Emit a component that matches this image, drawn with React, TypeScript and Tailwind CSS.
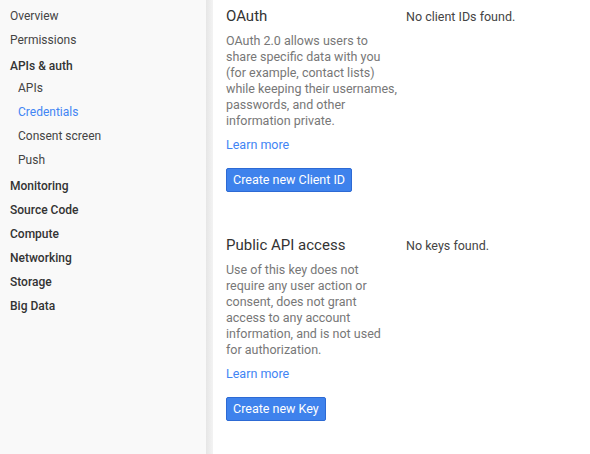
const nav: { label: string; sub?: boolean; bold?: boolean; active?: boolean; extra?: string }[] = [
  { label: 'Overview' },
  { label: 'Permissions' },
  { label: 'APIs & auth', bold: true, extra: 'mt-[2px] h-[22px]' },
  { label: 'APIs', sub: true },
  { label: 'Credentials', sub: true, active: true },
  { label: 'Consent screen', sub: true },
  { label: 'Push', sub: true },
  { label: 'Monitoring', bold: true, extra: 'mt-[2px]' },
  { label: 'Source Code', bold: true },
  { label: 'Compute', bold: true },
  { label: 'Networking', bold: true },
  { label: 'Storage', bold: true },
  { label: 'Big Data', bold: true },
];

function Section({
  title,
  body,
  button,
  empty,
}: {
  title: string;
  body: string;
  button: string;
  empty: string;
}) {
  return (
    <div className="flex">
      <div className="w-[180px] shrink-0">
        <h2 className="text-[15px] leading-5 text-[#333]">{title}</h2>
        <p className="mt-[7px] w-[172px] text-[12.5px] leading-4 text-[#777]">{body}</p>
        <a className="mt-[8px] block text-[12.5px] leading-4 text-[#4285f4]">Learn more</a>
        <button className="mt-[15px] h-[24px] rounded-[2px] border border-[#2d6ad4] bg-[#3e82ec] px-[6px] text-[12.5px] text-white">
          {button}
        </button>
      </div>
      <div className="pt-[3px] text-[12.5px] leading-4 text-[#444]">{empty}</div>
    </div>
  );
}

export default function App() {
  return (
    <div className="flex h-[454px] w-[590px] overflow-hidden bg-white font-['Roboto',sans-serif]">
      <nav className="w-[206px] shrink-0 bg-[#f9f9f9] pt-[4px] pl-[10px]">
        {nav.map((item) => (
          <div
            key={item.label}
            className={`text-[12px] leading-6 ${item.extra ?? ''} ${item.sub ? 'pl-2' : ''} ${item.bold ? 'font-medium text-[#333]' : 'text-[#444]'} ${item.active ? 'text-[#4285f4]' : ''}`}
          >
            {item.label}
          </div>
        ))}
      </nav>
      <div className="w-[7px] shrink-0 bg-gradient-to-r from-[#e6e6e6] to-[#f3f3f3]" />
      <main className="flex-1 pl-[13px] pt-[6px]">
        <Section
          title="OAuth"
          body="OAuth 2.0 allows users to share specific data with you (for example, contact lists) while keeping their usernames, passwords, and other information private."
          button="Create new Client ID"
          empty="No client IDs found."
        />
        <div className="h-[43px]" />
        <Section
          title="Public API access"
          body="Use of this key does not require any user action or consent, does not grant access to any account information, and is not used for authorization."
          button="Create new Key"
          empty="No keys found."
        />
      </main>
    </div>
  );
}
